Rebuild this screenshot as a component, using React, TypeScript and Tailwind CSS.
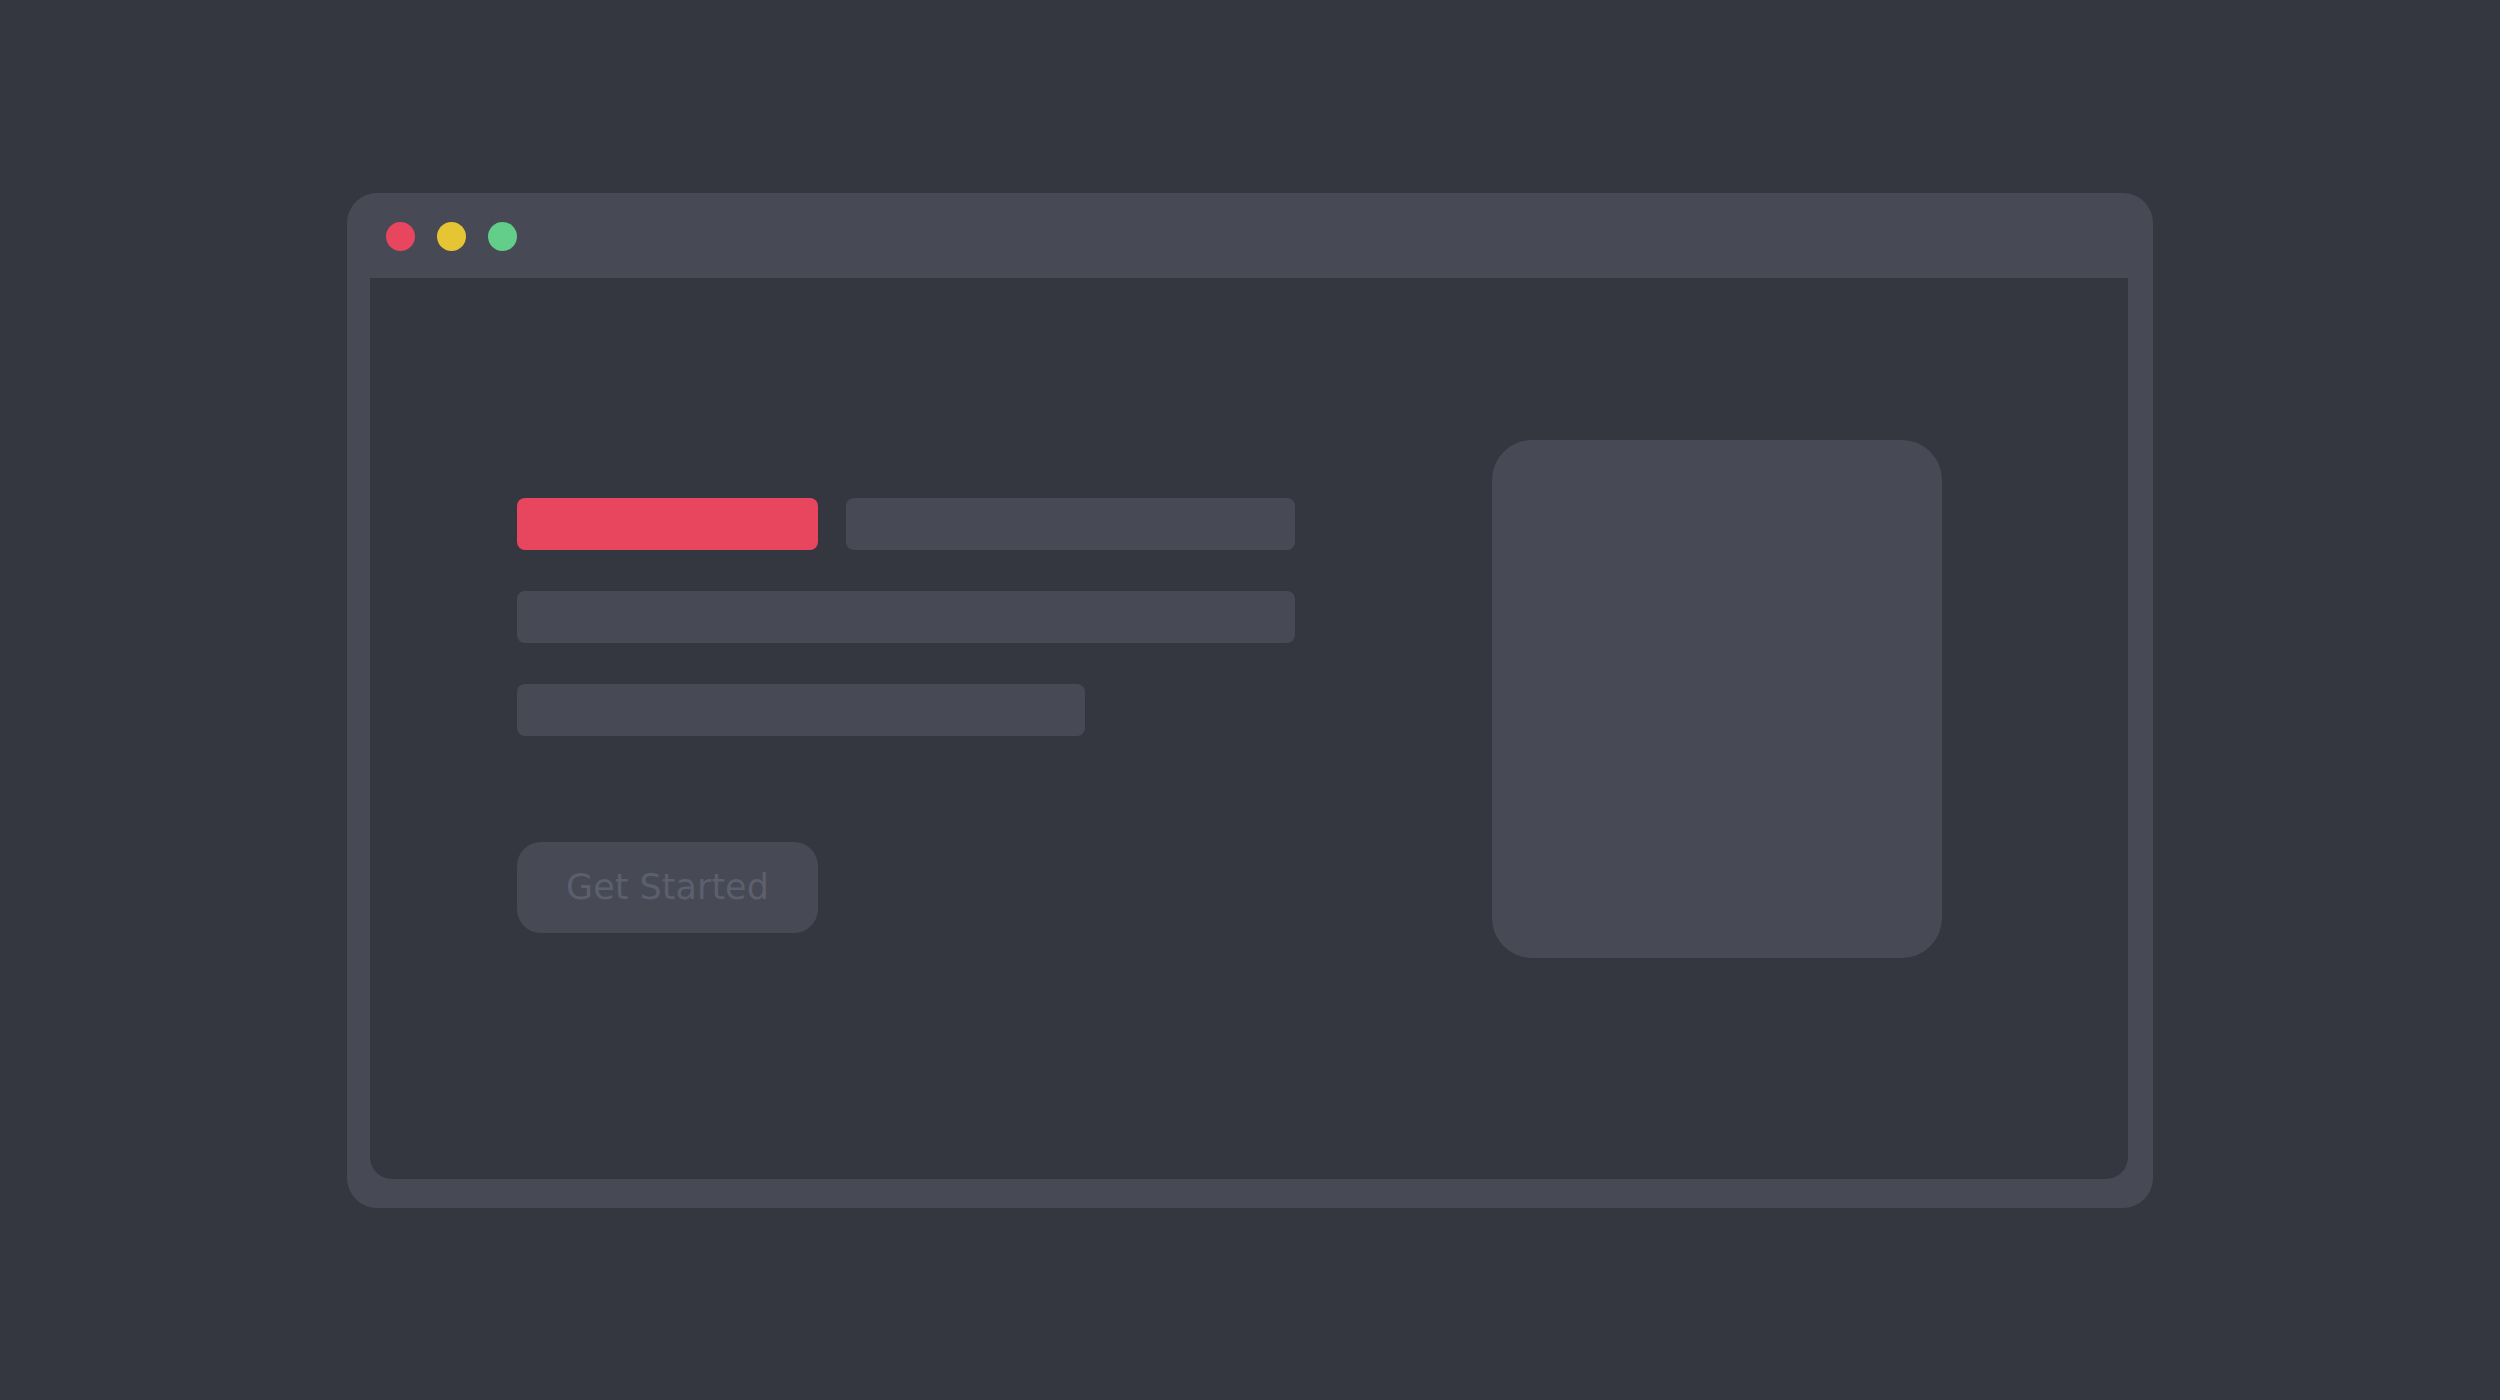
import React from 'react';

const Dot: React.FC<{ color: string }> = ({ color }) => (
  <span className={`block h-[29px] w-[29px] rounded-full ${color}`} />
);

export default function App() {
  return (
    <div className="flex h-[1400px] w-full items-center justify-center bg-[#343640] font-['DejaVu_Sans',sans-serif]">
      {/* browser window */}
      <div className="flex h-[1015px] w-[1806px] flex-col rounded-[30px] bg-[#474955]">
        <div className="flex h-[85px] shrink-0 items-start gap-[22px] pl-[39px] pt-[29px]">
          <Dot color="bg-[#e8455f]" />
          <Dot color="bg-[#e6c534]" />
          <Dot color="bg-[#63cd8a]" />
        </div>

        <div className="mb-[29px] ml-[23px] mr-[25px] flex flex-1 items-start rounded-b-[22px] bg-[#343640] pl-[147px]">
          <div className="mt-[220px] flex w-[778px] flex-col">
            <div className="flex gap-[28px]">
              <div className="h-[52px] w-[301px] rounded-[8px] bg-[#e8455f]" />
              <div className="h-[52px] flex-1 rounded-[8px] bg-[#474955]" />
            </div>
            <div className="mt-[41px] h-[52px] w-full rounded-[8px] bg-[#474955]" />
            <div className="mt-[41px] h-[52px] w-[568px] rounded-[8px] bg-[#474955]" />

            <button className="mt-[106px] flex h-[91px] w-[301px] items-center justify-center rounded-[24px] bg-[#474955] text-[35px] text-[#5c5f6e]">
              Get Started
            </button>
          </div>

          <div className="ml-auto mr-[186px] mt-[162px] h-[518px] w-[450px] rounded-[40px] bg-[#474955]" />
        </div>
      </div>
    </div>
  );
}
